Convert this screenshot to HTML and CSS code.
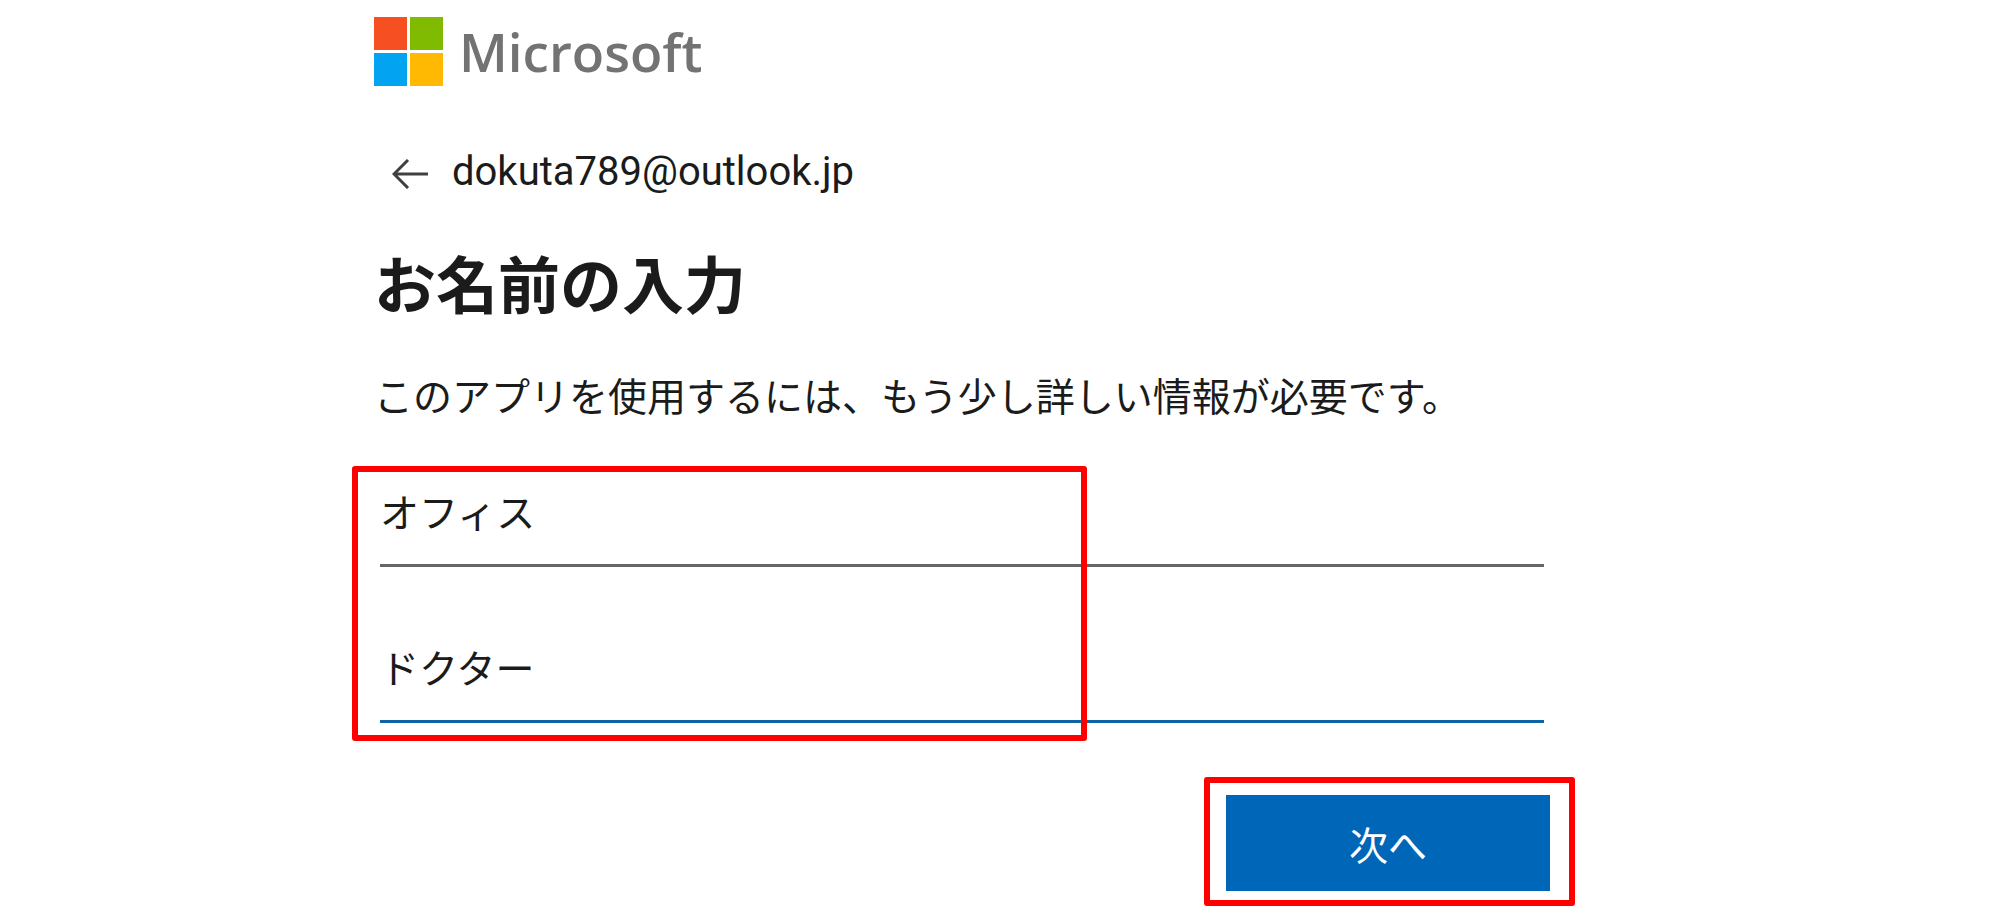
FILE: index.html
```html
<!DOCTYPE html>
<html lang="ja">
<head>
  <meta charset="UTF-8">
  <meta name="viewport" content="width=device-width, initial-scale=1">
  <title>お名前の入力</title>
  <link rel="stylesheet" href="styles.css">
</head>
<body>

  <main class="signup">
    <div class="logo">
      <svg class="logo-mark" viewBox="0 0 69 69" aria-hidden="true">
        <rect width="33" height="33" fill="#f65022"/>
        <rect x="36" width="33" height="33" fill="#80ba01"/>
        <rect y="36" width="33" height="33" fill="#02a4f2"/>
        <rect x="36" y="36" width="33" height="33" fill="#ffb902"/>
      </svg>
      <span class="logo-name">Microsoft</span>
    </div>

    <div class="identity">
      <button type="button" class="back-btn" aria-label="戻る">
        <svg viewBox="0 0 36 30" aria-hidden="true">
          <path d="M36 15H2M16 1L2 15L16 29" fill="none" stroke="#404040" stroke-width="3"/>
        </svg>
      </button>
      <span>dokuta789@outlook.jp</span>
    </div>

    <h1>お名前の入力</h1>
    <p class="description">このアプリを使用するには、もう少し詳しい情報が必要です。</p>

    <form>
      <div class="fields">
        <input type="text" id="lastName" aria-label="姓" value="オフィス">
        <input type="text" id="firstName" class="active" aria-label="名" value="ドクター">
        <div class="highlight highlight-fields"></div>
      </div>

      <div class="actions">
        <div class="next">
          <button type="submit" class="next-btn">次へ</button>
          <div class="highlight highlight-next"></div>
        </div>
      </div>
    </form>
  </main>

</body>
</html>
```

FILE: styles.css
```css
* {
  box-sizing: border-box;
}

body {
  margin: 0;
  background-color: #fff;
  color: #1b1b1b;
  font-family: Roboto, "Noto Sans CJK JP", sans-serif;
}

.signup {
  padding: 17px 22.5% 24px 18.7%;
}

.logo {
  display: flex;
  align-items: center;
  gap: 16px;
  height: 69px;
}

.logo-mark {
  width: 69px;
  height: 69px;
}

.logo-name {
  color: #737373;
  font-family: "Open Sans", sans-serif;
  font-size: 53px;
  font-weight: 600;
  line-height: 69px;
}

.identity {
  display: flex;
  align-items: center;
  gap: 24px;
  margin-top: 58px;
  padding-left: 18px;
  font-size: 40px;
  line-height: 56px;
}

.back-btn {
  width: 36px;
  height: 34px;
  padding: 4px 0 0;
  border: none;
  background: none;
  cursor: pointer;
}

.back-btn svg {
  display: block;
}

h1 {
  margin: 48px 0 0;
  font-size: 62px;
  font-weight: 700;
  line-height: 80px;
}

.description {
  margin: 42px 0 58px;
  font-size: 39px;
  line-height: 56px;
}

.fields {
  position: relative;
  display: flex;
  flex-direction: column;
  gap: 73px;
  padding: 0 6px;
}

input {
  width: 100%;
  height: 83px;
  padding: 0 0 28px;
  border: none;
  border-bottom: 3px solid #666;
  border-radius: 0;
  outline: none;
  background: none;
  color: inherit;
  font-family: inherit;
  font-size: 39px;
}

input.active {
  border-bottom-color: #0f64a6;
}

.actions {
  display: flex;
  justify-content: flex-end;
  margin-top: 72px;
}

.next {
  position: relative;
}

.next-btn {
  display: block;
  width: 324px;
  height: 96px;
  padding: 0;
  border: none;
  background-color: #0067b8;
  color: #fff;
  font-family: inherit;
  font-size: 39px;
  cursor: pointer;
}

/* red frames around the parts to fill in and press */
.highlight {
  position: absolute;
  border: 6px solid #f00;
  border-radius: 3px;
  pointer-events: none;
}

.highlight-fields {
  top: -18px;
  bottom: -18px;
  left: -22px;
  width: 62.5%;
}

.highlight-next {
  top: -18px;
  right: -25px;
  bottom: -15px;
  left: -22px;
}
```
